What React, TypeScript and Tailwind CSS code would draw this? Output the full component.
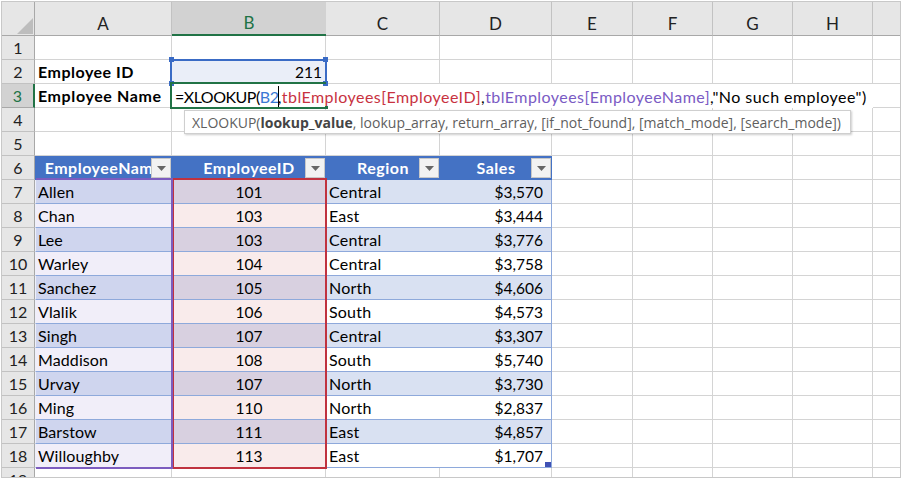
import React from "react";

const colClass = "grid grid-cols-[33px_137px_154px_114px_112px_81px_80px_80px_80px_28px]";
const font = "font-['Lato','Liberation_Sans',sans-serif]";
const rows: [string, number, string, string][] = [
  ["Allen", 101, "Central", "$3,570"],
  ["Chan", 103, "East", "$3,444"],
  ["Lee", 103, "Central", "$3,776"],
  ["Warley", 104, "Central", "$3,758"],
  ["Sanchez", 105, "North", "$4,606"],
  ["Vlalik", 106, "South", "$4,573"],
  ["Singh", 107, "Central", "$3,307"],
  ["Maddison", 108, "South", "$5,740"],
  ["Urvay", 107, "North", "$3,730"],
  ["Ming", 110, "North", "$2,837"],
  ["Barstow", 111, "East", "$4,857"],
  ["Willoughby", 113, "East", "$1,707"],
];

function ColHead({ label, active }: { label: string; active?: boolean }) {
  return (
    <div
      className={
        active
          ? "flex items-center justify-center pt-[10px] h-[34px] bg-[#d2d2d2] border-b-2 border-[#217346] text-[#217346] text-[17px]"
          : "flex items-center justify-center pt-[10px] h-[34px] bg-[#e6e6e6] border-r border-b border-r-[#c2c2c2] border-b-[#a8a8a8] text-[#222] text-[17px]"
      }
    >
      {label}
    </div>
  );
}

function RowHead({ n, active }: { n: number; active?: boolean }) {
  return (
    <div
      className={
        active
          ? "flex items-center justify-center pt-px h-[24px] bg-[#d2d2d2] border-r-2 border-b border-r-[#217346] border-b-[#a8a8a8] text-[#217346] text-[16px]"
          : "flex items-center justify-center pt-px h-[24px] bg-[#e6e6e6] border-r border-b border-r-[#a8a8a8] border-b-[#c2c2c2] text-[#222] text-[16px]"
      }
    >
      {n}
    </div>
  );
}

const Blank = () => <div className="h-[24px] border-r border-b border-[#d4d4d4]" />;

function TableHead({ label }: { label: string }) {
  return (
    <div className="relative h-[24px] bg-[#4472c4] border-b border-[#4472c4] flex items-center justify-center pt-px overflow-hidden">
      <span className="whitespace-nowrap text-white font-bold text-[16px] tracking-[0.5px]">{label}</span>
      <span className="absolute right-[1px] top-[2px] w-[20px] h-[20px] bg-[#f2f2f2] border border-[#c8c8c8] flex items-center justify-center">
        <svg width="9" height="5" viewBox="0 0 9 5"><path d="M0 0h9L4.5 5z" fill="#666" /></svg>
      </span>
    </div>
  );
}

function Handle({ className }: { className: string }) {
  return <span className={"absolute w-[5px] h-[5px] bg-[#3a6bc5] " + className} />;
}

export default function App() {
  return (
    <div className={"relative w-[902px] h-[479px] bg-white overflow-hidden " + font}>
      <div className="ml-[1px] mt-[1px] h-[477px] w-[900px] border border-[#c8c8c8] overflow-hidden">
        <div className={colClass}>
          <div className="relative h-[34px] bg-[#e6e6e6] border-r border-b border-[#a8a8a8]">
            <svg className="absolute right-[1px] bottom-[1px]" width="16" height="16" viewBox="0 0 16 16"><path d="M16 0v16H0z" fill="#bdbdbd" /></svg>
          </div>
          <ColHead label="A" />
          <ColHead label="B" active />
          {["C", "D", "E", "F", "G", "H", ""].map((c, i) => <ColHead key={i} label={c} />)}

          <RowHead n={1} />
          {Array.from({ length: 9 }).map((_, i) => <Blank key={i} />)}

          <RowHead n={2} />
          <div className="h-[24px] pt-px border-r border-b border-[#d4d4d4] flex items-center pl-[3px] font-bold text-[16px] tracking-[0.5px] text-black">Employee ID</div>
          <div className="h-[24px] pt-px bg-[#eaeef8] flex items-center justify-end pr-[4px] text-[15.5px] text-black">211</div>
          {Array.from({ length: 7 }).map((_, i) => <Blank key={i} />)}

          <RowHead n={3} active />
          <div className="h-[24px] pt-px border-r border-b border-[#d4d4d4] flex items-center pl-[3px] font-bold text-[16px] tracking-[0.6px] text-black whitespace-nowrap">Employee Name</div>
          <div className="col-span-7 h-[24px] pt-px bg-white flex items-center pl-[3px] text-[16px] tracking-[0.45px] text-black whitespace-pre">
            <span className="tracking-[-0.5px]">=XLOOKUP(</span><span className="text-[#3a78d4] tracking-[-0.3px]">B2</span>
            <span className="inline-block w-px h-[21px] bg-black -mx-px" />
            ,<span className="text-[#c8323f]">tblEmployees[EmployeeID]</span>,<span className="text-[#7a5bc4]">tblEmployees[EmployeeName]</span>,"No such employee")
          </div>
          <Blank />

          <RowHead n={4} />
          {Array.from({ length: 9 }).map((_, i) => <Blank key={i} />)}
          <RowHead n={5} />
          {Array.from({ length: 9 }).map((_, i) => <Blank key={i} />)}

          <RowHead n={6} />
          <TableHead label="EmployeeName" />
          <TableHead label="EmployeeID" />
          <TableHead label="Region" />
          <TableHead label="Sales" />
          {Array.from({ length: 5 }).map((_, i) => <Blank key={i} />)}

          {rows.map((r, i) => {
            const odd = i % 2 === 0;
            return (
              <React.Fragment key={r[0]}>
                <RowHead n={i + 7} />
                <div className={(odd ? "bg-[#cfd5ee]" : "bg-[#f1eef9]") + " h-[24px] pt-px border-b border-l border-r border-b-[#8ea9db] border-l-[#eef0fa] border-r-[#eef0fa] flex items-center pl-[2px] text-[16px] tracking-[0.1px] text-black"}>{r[0]}</div>
                <div className={(odd ? "bg-[#d8d0e0]" : "bg-[#f9ebeb]") + " h-[24px] pt-[2px] border-b border-[#8ea9db] flex items-center justify-center text-[15.5px] text-black"}>{r[1]}</div>
                <div className={(odd ? "bg-[#d9e1f2]" : "bg-white") + " h-[24px] pt-px border-b border-[#8ea9db] flex items-center pl-[3px] text-[16px] tracking-[0.2px] text-black"}>{r[2]}</div>
                <div className={(odd ? "bg-[#d9e1f2]" : "bg-white") + " relative h-[24px] pt-[2px] border-b border-r border-[#8ea9db] flex items-center justify-end pr-[8px] text-[15.5px] text-black"}>
                  {r[3]}
                  {i === 11 && <span className="absolute right-0 bottom-0 w-[6px] h-[5px] bg-[#3f51b5]" />}
                </div>
                {Array.from({ length: 5 }).map((_, k) => <Blank key={k} />)}
              </React.Fragment>
            );
          })}

          <RowHead n={19} />
          {Array.from({ length: 9 }).map((_, i) => <Blank key={i} />)}
        </div>
      </div>

      {/* B2 reference highlight */}
      <div className="absolute left-[170px] top-[59px] w-[157px] h-[25px] border-2 border-[#3a6bc5] pointer-events-none" />
      <Handle className="left-[169px] top-[57px]" />
      <Handle className="left-[323px] top-[57px]" />
      <Handle className="left-[169px] top-[81px]" />
      <Handle className="left-[323px] top-[81px]" />

      {/* active editor border */}
      <div className="absolute left-[170px] top-[82px] w-[156px] h-[27px] border-l-2 border-t-2 border-b-2 border-[#217346] pointer-events-none" />
      <span className="absolute left-[325px] top-[106px] w-[3px] h-[3px] bg-[#217346]" />

      {/* table range highlights */}
      <div className="absolute left-[172px] top-[178px] w-[155px] h-[291px] border-2 border-[#c0323f] pointer-events-none" />
      <div className="absolute left-[36px] top-[178px] w-[137px] h-[291px] border-t-2 border-r-2 border-b-2 border-[#7c5cbf] pointer-events-none" />

      {/* function tooltip */}
      <div className="absolute left-[184px] top-[110px] w-[667px] h-[24px] bg-white border border-[#cfcfcf] shadow-[1px_1px_2px_rgba(0,0,0,0.2)] flex items-center pl-[7px] font-['Open_Sans',sans-serif] text-[14px] text-[#5f5f5f] whitespace-nowrap">
        XLOOKUP(<b className="font-bold text-[#444]">lookup_value</b>, lookup_array, return_array, [if_not_found], [match_mode], [search_mode])
      </div>
    </div>
  );
}
